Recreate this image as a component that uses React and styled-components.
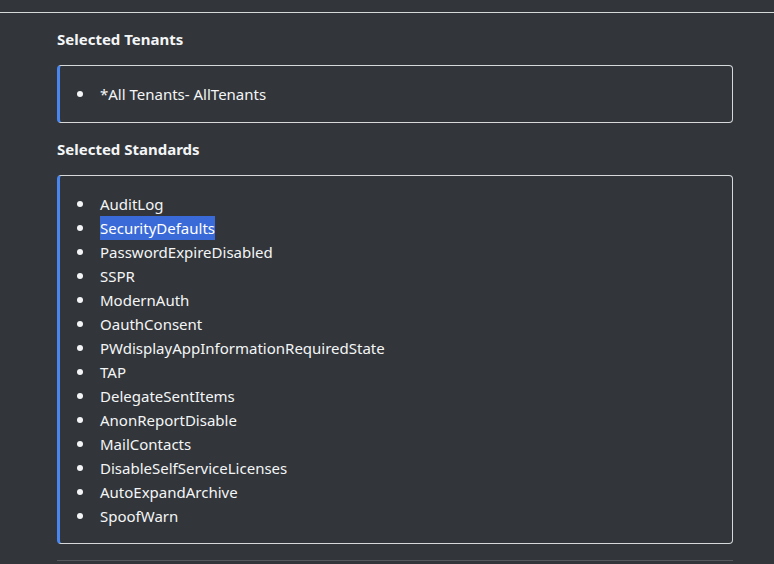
import styled, { createGlobalStyle } from "styled-components";

const GlobalStyle = createGlobalStyle`
  html, body {
    margin: 0;
    padding: 0;
    background: #32363a;
  }
  body {
    font-family: "Noto Sans", "Open Sans", sans-serif;
    color: #f4f5f6;
  }
`;

const Page = styled.div`
  min-height: 564px;
  background: #32363a;
  padding-top: 12px;
  overflow: hidden;
`;

const TopRule = styled.div`
  height: 1px;
  background: #d6d8da;
`;

const Content = styled.div`
  padding: 0 41px 0 57px;
`;

const Heading = styled.h3`
  margin: 15px 0 15px;
  font-size: 15px;
  line-height: 22px;
  font-weight: 700;
  color: #f4f5f6;
`;

const Card = styled.div`
  border: 1px solid #d6d8da;
  border-left: 3px solid #4a86f0;
  border-radius: 4px;
  padding: 16px 0 ${(p) => (p.tight ? "15px" : "16px")};
`;

const List = styled.ul`
  margin: 0;
  padding-left: 40px;
  list-style: none;
`;

const Item = styled.li`
  position: relative;
  font-size: 15px;
  line-height: 24px;
  color: #f4f5f6;

  &::before {
    content: "";
    position: absolute;
    left: -23px;
    top: 9px;
    width: 6px;
    height: 6px;
    border-radius: 50%;
    background: #f4f5f6;
  }
`;

const Selected = styled.span`
  background: #3a6ad8;
  color: #ffffff;
  display: inline-block;
`;

const BottomRule = styled.div`
  height: 1px;
  background: #55595d;
  margin-top: 16px;
`;

const standards = [
  "AuditLog",
  "SecurityDefaults",
  "PasswordExpireDisabled",
  "SSPR",
  "ModernAuth",
  "OauthConsent",
  "PWdisplayAppInformationRequiredState",
  "TAP",
  "DelegateSentItems",
  "AnonReportDisable",
  "MailContacts",
  "DisableSelfServiceLicenses",
  "AutoExpandArchive",
  "SpoofWarn",
];

export default function App() {
  return (
    <Page>
      <GlobalStyle />
      <TopRule />
      <Content>
        <Heading>Selected Tenants</Heading>
        <Card>
          <List>
            <Item>*All Tenants- AllTenants</Item>
          </List>
        </Card>
        <Heading>Selected Standards</Heading>
        <Card tight>
          <List>
            {standards.map((s) => (
              <Item key={s}>
                {s === "SecurityDefaults" ? <Selected>{s}</Selected> : s}
              </Item>
            ))}
          </List>
        </Card>
        <BottomRule />
      </Content>
    </Page>
  );
}
